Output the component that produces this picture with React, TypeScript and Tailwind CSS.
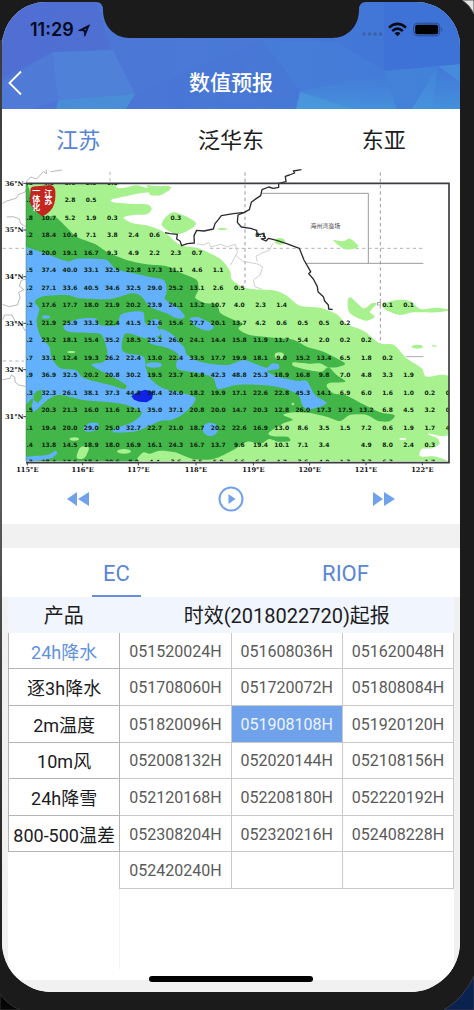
import { useState } from 'react';

type Point = [number, number];

const REGIONS = ['江苏', '泛华东', '东亚'];
const MODELS = ['EC', 'RIOF'];
const PRODUCTS = ['24h降水', '逐3h降水', '2m温度', '10m风', '24h降雪', '800-500温差', ''];
const TIMES = [
  ['051520024H', '051608036H', '051620048H'],
  ['051708060H', '051720072H', '051808084H'],
  ['051820096H', '051908108H', '051920120H'],
  ['052008132H', '052020144H', '052108156H'],
  ['052120168H', '052208180H', '052220192H'],
  ['052308204H', '052320216H', '052408228H'],
  ['052420240H', '', ''],
];

// Rainfall grid, one string per latitude row, "-" marks an empty point
const RAIN = [
  '4.5 4.9 3.6 2.3 0.0',
  '4.2 - 2.8 0.5',
  '1.8 10.7 5.2 1.9 0.3 - - 0.3',
  '1.2 18.4 10.4 7.1 3.8 2.4 0.6 - - - - 0.1',
  '2.8 20.0 19.1 16.7 9.3 4.9 2.2 2.3 0.7',
  '3.5 37.4 40.0 33.1 32.5 22.8 17.3 11.1 4.6 1.1',
  '7.2 27.1 33.6 40.5 34.6 32.5 29.0 25.2 13.1 2.6 0.5',
  '2.2 17.6 17.7 18.0 21.9 20.2 23.9 24.1 13.2 10.7 4.0 2.3 1.4 - - - - 0.1 0.1',
  '5.1 21.9 25.9 33.3 22.4 41.5 21.6 15.6 27.7 20.1 13.7 4.2 0.6 0.5 0.5 0.2',
  '7.2 23.2 18.1 15.4 35.2 18.5 25.2 26.0 24.1 14.4 15.8 11.9 11.7 5.4 2.0 0.2 0.2',
  '0.7 33.1 12.4 19.3 26.2 22.4 13.0 22.4 33.5 17.7 19.9 18.1 9.0 15.2 13.4 6.5 1.8 0.2',
  '1.9 36.9 32.5 20.2 20.8 30.2 19.5 23.7 14.8 42.3 48.8 25.3 18.9 16.8 9.8 7.0 4.8 3.3 1.9',
  '3.3 32.3 26.1 38.1 37.3 44.8 38.4 24.0 18.2 19.9 17.1 22.6 22.8 45.3 14.1 6.9 6.0 1.6 1.0 0.2 0.1',
  '3.5 20.3 21.3 16.0 11.6 12.1 35.0 37.1 20.8 20.0 14.7 20.3 12.8 26.0 17.3 17.5 13.2 6.8 4.5 3.2 0.2',
  '2.1 19.4 20.0 29.0 25.0 32.7 22.7 21.0 18.7 20.2 22.6 16.9 13.0 8.6 3.5 1.5 7.2 0.6 1.9 1.7 4.1',
  '7.4 13.8 14.5 18.9 18.0 16.9 16.1 24.3 16.7 13.7 9.6 19.4 10.1 7.1 3.4 - 4.9 8.0 2.4 0.3',
  '1.3 18.4 17.5 18.4 20.6 8.0 4.4 3.6 7.5 5.0 6.6 6.8 4.7 3.6 4.0 1.3 3.3 6.3 - 1.7',
];

const LIGHT: Point[][] = [
  [
    [60, 40], [350, 40], [348, 66], [375, 68], [412, 61], [445, 70], [465, 66], [500, 63], [514, 68], [498, 80], [475, 92],
    [450, 83], [420, 85], [378, 94], [334, 104], [340, 112], [385, 116], [440, 118], [455, 132], [440, 148], [400, 150],
    [370, 158], [400, 175], [445, 182], [480, 195], [505, 210], [520, 225], [545, 242], [590, 248], [630, 265],
    [665, 285], [690, 318], [697, 345], [740, 370], [820, 376], [860, 392], [900, 422], [960, 428], [1010, 448],
    [1040, 478], [1090, 497], [1140, 535], [1182, 540], [1220, 580], [1265, 610], [1280, 635], [1350, 640],
    [1350, 803], [1285, 806], [1312, 820], [1318, 838], [1295, 850], [1265, 852], [1260, 874], [1300, 874],
    [1330, 882], [1350, 893], [1350, 910], [60, 910],
  ],
  [[485, 180], [520, 142], [588, 175], [535, 208]],
  [[1000, 226], [1030, 229], [1050, 221], [1075, 245], [1035, 253]],
  [[1043, 412], [1052, 397], [1090, 430], [1115, 415], [1130, 416], [1110, 440], [1124, 455], [1095, 467], [1050, 445]],
  [[1148, 418], [1190, 405], [1230, 408], [1262, 432], [1310, 428], [1350, 435], [1310, 442], [1240, 442], [1200, 450], [1160, 436]],
];

const MEDIUM: Point[][] = [
  [
    [60, 50], [86, 68], [98, 120], [130, 152], [165, 155], [195, 182], [230, 215], [285, 237], [320, 260], [380, 285], [440, 298],
    [500, 304], [545, 325], [590, 345], [595, 375], [586, 398], [615, 414], [650, 418], [662, 445], [700, 464],
    [728, 475], [716, 492], [750, 510], [820, 518], [880, 524], [920, 545], [970, 560], [1034, 594], [1014, 606],
    [985, 607], [960, 595], [925, 596], [880, 592], [882, 604], [920, 614], [965, 620], [985, 607], [1010, 630],
    [1036, 650], [990, 653], [980, 664], [1000, 685], [1040, 692], [1090, 718], [1140, 742], [1183, 750],
    [1170, 768], [1135, 768], [1100, 750], [1050, 750], [1020, 768], [980, 755], [930, 744], [880, 742],
    [850, 750], [878, 764], [850, 775], [806, 804], [822, 814], [862, 815], [870, 828], [835, 830], [808, 822],
    [782, 836], [742, 830], [700, 855], [640, 882], [580, 882], [525, 862], [480, 857], [450, 866], [430, 862],
    [412, 880], [390, 910], [60, 910],
  ],
];

const BLUE: Point[][] = [
  [
    [60, 240], [78, 246], [120, 260], [200, 288], [230, 281], [290, 281], [322, 286], [348, 312], [400, 325], [445, 335],
    [492, 346], [500, 380], [495, 403], [530, 425], [555, 455], [530, 460], [500, 445], [450, 425], [425, 395],
    [395, 385], [330, 402], [240, 400], [200, 390], [130, 394], [104, 410], [118, 432], [110, 470], [122, 515],
    [148, 545], [155, 580], [182, 610], [228, 616], [252, 640], [330, 660], [372, 672], [378, 660], [345, 640],
    [275, 600], [312, 590], [322, 560], [305, 510], [275, 504], [205, 500], [192, 482], [235, 462], [285, 460],
    [300, 480], [350, 480], [362, 450], [395, 440], [430, 442], [436, 475], [470, 485], [480, 510], [440, 520],
    [378, 505], [365, 548], [380, 565], [430, 575], [438, 610], [450, 640], [490, 670], [580, 694], [580, 716], [545, 750],
    [510, 766], [480, 768], [410, 798], [342, 802], [348, 790], [400, 770], [425, 742], [380, 720], [330, 712],
    [250, 705], [180, 690], [150, 700], [128, 718], [102, 740], [95, 725], [98, 700], [60, 690],
  ],
  [
    [478, 494], [495, 495], [525, 515], [535, 530], [552, 546], [562, 570], [600, 590], [680, 600], [730, 585],
    [765, 596], [800, 608], [815, 596], [835, 598], [835, 612], [800, 618], [830, 634], [890, 648], [920, 648], [945, 690], [980, 715], [930, 733], [908, 722],
    [895, 690], [850, 670], [790, 660], [710, 660], [655, 672], [640, 640], [600, 625], [540, 615], [528, 600],
    [535, 570], [505, 550], [450, 535], [452, 515], [485, 518],
  ],
  [[570, 462], [595, 457], [640, 482], [625, 497], [590, 486]],
  [[60, 877], [140, 870], [166, 857], [170, 866], [145, 882], [60, 892]],
  [[250, 790], [270, 774], [295, 776], [290, 794], [262, 800]],
];

const HOLES: Point[][] = [[[230, 878], [240, 848], [262, 844], [266, 855], [252, 880]]];

// Coast and province lines
const COAST = [
  'M904 14 L880 18 884 24 868 30 856 34 858 50 836 55 836 67 820 70 806 66 786 74 782 92 764 104 754 112 748 134 733 142 700 146 664 152 655 164 645 176 640 192 612 198 590 196 582 212 583 234 562 236 545 242 540 228 530 222 532 208 510 206 495 203',
  'M733 142 L714 150 712 172 724 186 752 190 770 196 772 210 790 206 796 220 784 222 798 228 806 220 830 226 860 236 898 250 912 285 932 320 926 326 940 342 952 365 954 380 970 395 974 408 985 420 986 432 998 434',
];
const BORDERS = [
  'M8 115 L20 108 48 100 56 88 74 82 82 66 80 48 92 36 110 42 130 20 140 26 138 14',
  'M20 156 L40 155 58 162 62 176 76 184',
  'M152 20 L186 15',
  'M8 418 L26 425 52 420 60 398 56 382 72 374 58 364 64 346 78 342',
  'M8 464 L14 450 36 450 48 474 66 482 76 498',
  'M8 644 L30 640 34 630 44 636 46 652 56 660 76 664',
];
const INNER_BORDERS = [
  'M590 236 L610 240 626 232 632 246 664 238 680 246 706 238 712 262 692 300',
  'M706 270 L730 290 770 296 788 305 780 330 760 345 764 365 785 372',
  'M818 236 L808 256 786 264 768 274 772 290',
];

const LATS: [string, number][] = [['36°N', 55], ['35°N', 195], ['34°N', 335], ['33°N', 475], ['32°N', 614], ['31°N', 755]];
const LONS: [string, number][] = [
  ['115°E', 82], ['116°E', 248], ['117°E', 415], ['118°E', 588], ['119°E', 760], ['120°E', 929], ['121°E', 1098], ['122°E', 1267],
];

// Closed Catmull-Rom curve through the contour points
function contour(pts: Point[]) {
  const n = pts.length;
  let d = `M${pts[0][0]} ${pts[0][1]}`;
  for (let i = 0; i < n; i++) {
    const a = pts[(i - 1 + n) % n];
    const b = pts[i];
    const c = pts[(i + 1) % n];
    const e = pts[(i + 2) % n];
    d += ` C${b[0] + (c[0] - a[0]) / 7} ${b[1] + (c[1] - a[1]) / 7} ${c[0] - (e[0] - b[0]) / 7} ${c[1] - (e[1] - b[1]) / 7} ${c[0]} ${c[1]}`;
  }
  return d + 'Z';
}

function RainMap() {
  return (
    <svg viewBox="6 0 1374 939" className="block w-full" role="img" aria-label="降水">
      <defs>
        <clipPath id="frame">
          <rect x="78" y="55" width="1269" height="834" />
        </clipPath>
      </defs>
      <g fill="none" stroke="#b5b2b8" strokeWidth="3" strokeDasharray="10 9">
        <path d="M330 20V50M8 250H72M8 588H72M630 250H1270" />
        <path d="M735 22V365M1141 22V538" stroke="#9c98a2" />
      </g>
      <g fill="none" stroke="#a9a9ad" strokeWidth="2.5">
        {BORDERS.map(d => <path key={d} d={d} />)}
      </g>
      <g fill="none" stroke="#c6c6c9" strokeWidth="2.5">
        {INNER_BORDERS.map(d => <path key={d} d={d} />)}
      </g>
      <g clipPath="url(#frame)">
        <g fill="#a7f18f">
          {LIGHT.map((p, i) => <path key={i} d={contour(p)} />)}
          <ellipse cx="840" cy="229" rx="15" ry="10" />
          <ellipse cx="667" cy="192" rx="14" ry="3" />
          <ellipse cx="1252" cy="545" rx="17" ry="6" />
          <ellipse cx="1303" cy="543" rx="8" ry="2" />
          <path d="M440 60Q480 66 505 62Q520 70 498 82Q480 96 450 90Z" />
        </g>
        <g fill="#43b649">
          {MEDIUM.map((p, i) => <path key={i} d={contour(p)} />)}
        </g>
        <g fill="#63b1fd">
          {BLUE.map((p, i) => <path key={i} d={contour(p)} />)}
          <ellipse cx="631" cy="793" rx="23" ry="20" />
          <ellipse cx="466" cy="474" rx="16" ry="12" />
          <ellipse cx="462" cy="600" rx="24" ry="8" />
          <ellipse cx="138" cy="456" rx="12" ry="5" />
        </g>
        <path d="M100 690 L110 678 124 674 126 700 114 714 102 706Z" fill="#43b649" />
        <g fill="#a7f18f">
          {HOLES.map((p, i) => <path key={i} d={contour(p)} />)}
          <ellipse cx="223" cy="822" rx="14" ry="5" />
          <ellipse cx="372" cy="859" rx="21" ry="7" />
          <ellipse cx="214" cy="561" rx="12" ry="3" />
          <ellipse cx="838" cy="572" rx="14" ry="10" />
          <ellipse cx="879" cy="717" rx="4" ry="4" />
        </g>
        <ellipse cx="1208" cy="822" rx="10" ry="3" fill="#fff" />
        <path d="M394 694 L414 680 436 674 460 682 456 702 440 712 418 710 402 704Z" fill="#1022e6" />
      </g>
      <g fill="none" stroke="#85858a" strokeWidth="2.5">
        <path d="M785 85H1105V295M915 295H1270" />
        <path d="M1218 575H1270" stroke="#a391ad" />
      </g>
      <g fill="none" stroke="#2c2c30" strokeWidth="4" strokeLinejoin="round">
        {COAST.map(d => <path key={d} d={d} />)}
      </g>
      <text x="976" y="190" textAnchor="middle" fontSize="18" fill="#444" className="font-['Noto_Sans_CJK_SC',sans-serif]">海州湾渔场</text>
      <g clipPath="url(#frame)" fontSize="18" textAnchor="middle" fill="#10240f" className="font-['DejaVu_Sans',sans-serif] font-bold">
        {RAIN.map((row, r) =>
          row.split(' ').map((v, c) => v !== '-' && (
            <text key={`${r}-${c}`} x={83 + c * 63.5} y={60 + r * 52.4}>{v}</text>
          ))
        )}
      </g>
      <rect x="1132" y="412" width="9" height="8" fill="none" stroke="#888" strokeWidth="2" />
      <path d="M78 55V889" stroke="#467a52" strokeWidth="1.5" />
      <path d="M78 55H1347V893" fill="none" stroke="#3c3a42" strokeWidth="5" />
      <path d="M78 893H1349" stroke="#3c3a42" strokeWidth="5" />
      <path d="M82 893v8M248 893v8M415 893v8M588 893v8M760 893v8M929 893v8M1098 893v8M1267 893v8M70 55h8M70 195h8M70 335h8M70 475h8M70 614h8M70 755h8" stroke="#3c3a42" strokeWidth="3" />
      <g fontSize="20" fill="#111" className="font-['DejaVu_Serif',serif] font-bold">
        {LATS.map(([t, y]) => <text key={t} x="71" y={y + 7} textAnchor="end">{t}</text>)}
        {LONS.map(([t, x]) => <text key={t} x={x} y="921" textAnchor="middle">{t}</text>)}
      </g>
      <path d="M92 70 Q96 62 112 64 L150 60 Q164 62 166 78 Q168 110 158 128 Q146 146 126 154 L104 136 Q90 122 89 104Z" fill="#c2261f" />
      <g fontSize="24" fill="#fff" className="font-['Noto_Sans_CJK_SC',sans-serif] font-bold [writing-mode:vertical-rl]">
        <text x="109" y="66">一体化</text>
        <text x="145" y="72">江苏</text>
      </g>
    </svg>
  );
}

function HeaderPattern() {
  return (
    <svg viewBox="0 0 458 107" preserveAspectRatio="none" className="absolute inset-0 w-full h-full" aria-hidden="true">
      <defs>
        <linearGradient id="sky" x1="0" x2="1" y1="0" y2="0">
          <stop offset="0" stopColor="#5073d6" />
          <stop offset="0.45" stopColor="#4979d6" />
          <stop offset="1" stopColor="#3f76d8" />
        </linearGradient>
        <linearGradient id="glow" x1="0" x2="0" y1="0" y2="1">
          <stop offset="0" stopColor="#4a90dc" stopOpacity="0.1" />
          <stop offset="1" stopColor="#459adb" stopOpacity="0.75" />
        </linearGradient>
      </defs>
      <rect width="458" height="107" fill="url(#sky)" />
      <path d="M0 0H95L108 47L50 50L0 76Z" fill="#5269d0" opacity="0.45" />
      <path d="M50 50L111 48L133 92L56 98Z" fill="#5288d8" opacity="0.6" />
      <path d="M0 80L50 50L56 98L30 107H0Z" fill="#4f82d8" opacity="0.5" />
      <path d="M56 98L133 92L124 107H54Z" fill="#4893d6" opacity="0.8" />
      <path d="M133 92L260 38L214 107H124Z" fill="#4a74d8" opacity="0.3" />
      <path d="M260 38L335 40L382 69L298 90Z" fill="#4680da" opacity="0.6" />
      <path d="M232 38H262L296 90L214 107Z" fill="#4a77d8" opacity="0.4" />
      <path d="M298 90L382 69L395 107H294Z" fill="url(#glow)" />
      <path d="M298 90L352 107H294Z" fill="#4ba0dc" opacity="0.5" />
      <path d="M382 0H458V64L382 68Z" fill="#3c6fd6" opacity="0.6" />
      <path d="M382 69L436 64L430 107H395Z" fill="#4384da" opacity="0.8" />
      <path d="M436 64L458 78V107H410Z" fill="url(#glow)" />
      <path d="M436 64L458 62V80Z" fill="#4a94de" opacity="0.7" />
    </svg>
  );
}

function StatusIcons() {
  return (
    <svg width="84" height="16" viewBox="0 0 84 16" aria-hidden="true">
      <g fill="#3c62a8">
        <circle cx="4" cy="12" r="1.8" />
        <circle cx="9.500" cy="12" r="1.8" />
        <circle cx="15" cy="12" r="1.8" />
        <circle cx="20.500" cy="12" r="1.8" />
      </g>
      <g fill="none" stroke="#050a14" strokeWidth="2.6">
        <path d="M29 5.6Q37.500 -2 46 5.600" />
        <path d="M32.200 9Q37.500 4.400 42.800 9" />
      </g>
      <path d="M34.500 11.200Q37.500 8.800 40.500 11.200L37.500 14.200Z" fill="#050a14" />
      <rect x="53.700" y="1.200" width="26" height="12.600" rx="3.500" fill="none" stroke="#2b4a8c" strokeWidth="1" />
      <rect x="55.200" y="2.700" width="23" height="9.600" rx="2" fill="#000" />
      <path d="M81.300 5.500Q83.300 7.500 81.300 9.700Z" fill="#2b4a8c" />
    </svg>
  );
}

export default function App() {
  const [region, setRegion] = useState('江苏');
  const [model, setModel] = useState('EC');
  const [product, setProduct] = useState('24h降水');
  const [time, setTime] = useState('051908108H');
  const [playing, setPlaying] = useState(false);

  return (
    <div className="relative min-h-screen flex flex-col bg-[#1b1b1b] pt-[2px] pl-[2px] pr-[14px] pb-[18px] font-[Roboto,'Noto_Sans_CJK_SC',sans-serif] text-[#1c1c1e]">
      <div className="absolute left-0 top-10 bottom-12 w-[2px] bg-linear-to-b from-[#3a3a3a] via-[#5a5a5a] to-[#1b1b1b]" />
      <svg width="12" height="14" viewBox="0 0 12 14" className="absolute top-0 right-0" aria-hidden="true">
        <path d="M0 0H12V14Q8 5 0 0Z" fill="#e4e4e4" stroke="#555" />
      </svg>
      <svg width="30" height="34" viewBox="0 0 30 34" className="absolute bottom-0 right-0" aria-hidden="true">
        <path d="M30 0Q20 22 0 34H30Z" fill="#0a2250" stroke="#3b3d44" />
      </svg>
      <svg width="20" height="18" viewBox="0 0 20 18" className="absolute bottom-0 left-0" aria-hidden="true">
        <path d="M0 2Q7 12 20 18H0Z" fill="#060606" stroke="#333" />
      </svg>

      <div className="relative flex-1 flex flex-col overflow-hidden bg-white rounded-t-[44px] rounded-b-[50px]">
        <header className="relative h-[107px] flex flex-col">
          <HeaderPattern />
          <svg width="270" height="36" viewBox="0 0 270 36" className="absolute top-0 left-1/2 -translate-x-1/2" aria-hidden="true">
            <path d="M0 0Q7 0 7 8C7 24 18 36 34 36H236C252 36 263 24 263 8Q263 0 270 0Z" fill="#1b1b1b" />
          </svg>
          <div className="relative flex items-center justify-between h-14 pl-7 pr-4">
            <div className="flex items-center gap-1 font-[Inter,sans-serif] font-semibold text-lg text-[#050a1c]">
              11:29
              <svg width="12" height="13" viewBox="0 0 12 13" aria-hidden="true">
                <path d="M0.500 6.500L11.500 0.800L6.800 12.300L6 6.900Z M4.600 6L6.800 5.900L7.400 7.500L8.900 3.800Z" fillRule="evenodd" fill="#050a1c" stroke="#050a1c" strokeWidth="0.700" strokeLinejoin="round" />
              </svg>
            </div>
            <StatusIcons />
          </div>
          <div className="relative flex-1 flex items-center justify-center pb-0.5">
            <button type="button" aria-label="返回" className="absolute left-1.5 text-white">
              <svg width="14" height="26" viewBox="0 0 14 26" fill="none" stroke="currentColor" strokeWidth="1.800">
                <path d="M13 1.500L1.500 13L13 24.500" />
              </svg>
            </button>
            <h1 className="text-[21px] leading-6 font-medium text-white">数值预报</h1>
          </div>
        </header>

        <nav className="grid grid-cols-3 h-14 pt-1.5">
          {REGIONS.map(r => (
            <button key={r} type="button" onClick={() => setRegion(r)} className={`text-[22px] ${region === r ? 'text-[#5585d6]' : 'text-[#1c1c1e]'}`}>
              {r}
            </button>
          ))}
        </nav>

        <RainMap />

        <div className="grid grid-cols-3 h-[46px] pb-1 justify-items-center items-center text-[#70a2ec]">
          <button type="button" aria-label="后退">
            <svg width="22" height="14" viewBox="0 0 22 14" fill="currentColor"><path d="M0 7L10 0V14ZM11 7L22 0V14Z" /></svg>
          </button>
          <button type="button" aria-label="播放" aria-pressed={playing} onClick={() => setPlaying(!playing)}>
            <svg width="26" height="26" viewBox="0 0 26 26" fill="currentColor">
              <circle cx="13" cy="13" r="11.500" fill="none" stroke="currentColor" strokeWidth="2" />
              <path d="M10.500 8L17.500 13L10.500 18Z" />
            </svg>
          </button>
          <button type="button" aria-label="前进">
            <svg width="22" height="14" viewBox="0 0 22 14" fill="currentColor"><path d="M0 0L10 7L0 14ZM11 0L22 7L11 14Z" /></svg>
          </button>
        </div>

        <div className="h-6 bg-[#f1f1f1]" />

        <div className="grid grid-cols-2 h-[49px] justify-items-center">
          {MODELS.map(m => (
            <button key={m} type="button" onClick={() => setModel(m)} className={`px-[11px] pt-1 min-w-12 text-[22px] text-[#5a86d6] border-b-2 ${model === m ? 'border-[#6a8fd8]' : 'border-transparent'}`}>
              {m}
            </button>
          ))}
        </div>

        <div className="flex-1 flex flex-col px-[6px] pb-3 bg-[#f1f1f1]">
          <div className="flex-1 bg-white">
            <table className="w-full table-fixed border-collapse text-center">
              <thead>
                <tr className="h-9 bg-[#f0f5fe] text-xl leading-6">
                  <th scope="col" className="p-0 pt-0.5 font-normal">产品</th>
                  <th scope="col" colSpan={3} className="p-0 pt-0.5 font-normal">时效(2018022720)起报</th>
                </tr>
              </thead>
            </table>
            <table className="w-full h-64 table-fixed border-collapse text-center">
              <tbody>
                {TIMES.map((row, i) => (
                  <tr key={i}>
                    <td className={`p-0 ${PRODUCTS[i] ? 'border border-t-0 border-[#b4b4b4]' : ''}`}>
                      {PRODUCTS[i] && (
                        <button type="button" onClick={() => setProduct(PRODUCTS[i])} className={`block w-full h-6 pt-1 text-lg leading-5 whitespace-nowrap ${product === PRODUCTS[i] ? 'text-[#5f92de]' : ''}`}>
                          {PRODUCTS[i]}
                        </button>
                      )}
                    </td>
                    {row.map((t, j) => (
                      <td key={j} className={`p-0 border border-t-0 border-[#c9c9c9] ${t && time === t ? 'bg-[#70a2ec] text-[#eef5ff]' : 'text-[#5a5a5a]'}`}>
                        {t && (
                          <button type="button" onClick={() => setTime(t)} className="block w-full h-6 pt-0.5 text-base leading-5">{t}</button>
                        )}
                      </td>
                    ))}
                  </tr>
                ))}
              </tbody>
            </table>
            <div className="h-20 w-1/4 border-r border-[#f3f3f3]" />
          </div>
        </div>

        <div className="absolute bottom-[10px] left-1/2 -translate-x-1/2 w-[164px] h-[6px] rounded-full bg-black" />
      </div>
    </div>
  );
}
